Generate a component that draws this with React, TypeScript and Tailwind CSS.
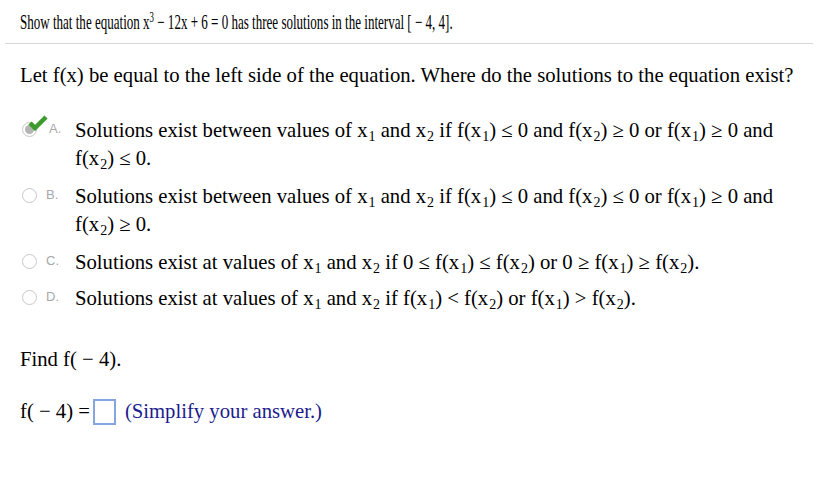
import React from 'react'

function Sub({ children }: { children: React.ReactNode }) {
  return <sub className="text-[14px] relative top-[4px] align-baseline leading-none ml-[1px]">{children}</sub>
}

function X1() {
  return (
    <>
      x<Sub>1</Sub>
    </>
  )
}
function X2() {
  return (
    <>
      x<Sub>2</Sub>
    </>
  )
}

function Radio({ letter, checked }: { letter: string; checked?: boolean }) {
  return (
    <div className="relative flex items-center w-[62px] shrink-0 h-[28px]">
      <div className="w-[15px] h-[15px] rounded-full border border-[#c8c8c8] ml-[9px] flex items-center justify-center bg-white">
        {checked && <div className="w-[9px] h-[9px] rounded-full bg-[#b4b4b4]" />}
      </div>
      {checked && (
        <svg className="absolute left-[15px] top-[0px]" width="20" height="16" viewBox="0 0 20 16">
          <path d="M2 8 L7 13 L18 2" fill="none" stroke="#3d9b2c" strokeWidth="4.5" />
        </svg>
      )}
      <span className={`${checked ? 'ml-[12px]' : 'ml-[9px]'} text-[13px] text-[#a8a8a8] font-['Liberation_Sans',sans-serif]`}>{letter}.</span>
    </div>
  )
}

export default function App() {
  return (
    <div className="w-[818px] h-[484px] bg-white text-black font-['Liberation_Serif',serif] text-[20.7px]">
      <div className="h-[44px] pl-[15px] pt-[7px] border-b border-[#d8d8d8] mx-[5px]">
        <span className="inline-block origin-left scale-x-[0.63] whitespace-nowrap">
          Show that the equation x<sup className="text-[14px]">3</sup> − 12x + 6 = 0 has three solutions in the interval [ − 4, 4].
        </span>
      </div>
      <div className="pl-[20px] pt-[16px]">Let f(x) be equal to the left side of the equation. Where do the solutions to the equation exist?</div>

      <div className="pl-[13px] pt-[24px] flex flex-col gap-[9px]">
        <div className="flex">
          <Radio letter="A" checked />
          <div className="leading-[28px] pt-[1px]">
            Solutions exist between values of <X1 /> and <X2 /> if f(<X1 />) ≤ 0 and f(<X2 />) ≥ 0 or f(<X1 />) ≥ 0 and
            <br />
            f(<X2 />) ≤ 0.
          </div>
        </div>
        <div className="flex">
          <Radio letter="B" />
          <div className="leading-[28px] pt-[1px]">
            Solutions exist between values of <X1 /> and <X2 /> if f(<X1 />) ≤ 0 and f(<X2 />) ≤ 0 or f(<X1 />) ≥ 0 and
            <br />
            f(<X2 />) ≥ 0.
          </div>
        </div>
        <div className="flex">
          <Radio letter="C" />
          <div className="leading-[28px] pt-[1px]">
            Solutions exist at values of <X1 /> and <X2 /> if 0 ≤ f(<X1 />) ≤ f(<X2 />) or 0 ≥ f(<X1 />) ≥ f(<X2 />).
          </div>
        </div>
        <div className="flex -mt-[2px]">
          <Radio letter="D" />
          <div className="leading-[28px] pt-[1px]">
            Solutions exist at values of <X1 /> and <X2 /> if f(<X1 />) &lt; f(<X2 />) or f(<X1 />) &gt; f(<X2 />).
          </div>
        </div>
      </div>

      <div className="pl-[20px] pt-[32px]">Find f( − 4).</div>
      <div className="pl-[20px] pt-[21px] flex items-center">
        <span>f( − 4) =</span>
        <span className="inline-block w-[23px] h-[26px] border-2 border-[#86a4de] ml-[3px] mr-[9px]" />
        <span className="text-[#1c1c8c]">(Simplify your answer.)</span>
      </div>
    </div>
  )
}
